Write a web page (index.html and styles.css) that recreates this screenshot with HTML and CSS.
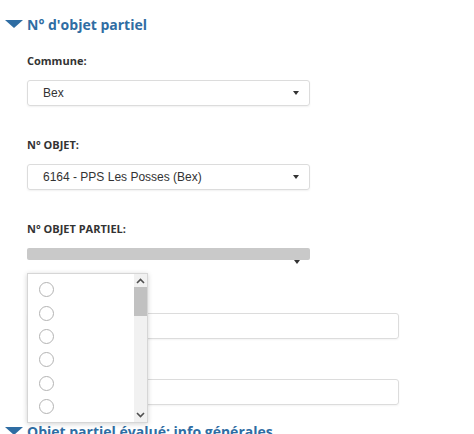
FILE: index.html
```html
<!DOCTYPE html>
<html lang="fr">
<head>
<meta charset="utf-8">
<title>N° d'objet partiel</title>
<link rel="stylesheet" href="styles.css">
</head>
<body>
<div class="page">
  <h2 class="sec-title"><span class="tri"></span>N° d'objet partiel</h2>
  <div class="form">
    <div class="field">
      <label class="lbl">Commune:</label>
      <div class="select"><span class="val">Bex</span><span class="caret"></span></div>
    </div>
    <div class="field">
      <label class="lbl">N° OBJET:</label>
      <div class="select"><span class="val">6164 - PPS Les Posses (Bex)</span><span class="caret"></span></div>
    </div>
    <div class="field field-open">
      <label class="lbl">N° OBJET PARTIEL:</label>
      <div class="select-open"><div class="bar"></div><span class="caret caret-low"></span></div>
      <div class="dropdown">
        <ul class="options">
          <li class="opt"><span class="radio"></span></li>
          <li class="opt"><span class="radio"></span></li>
          <li class="opt"><span class="radio"></span></li>
          <li class="opt"><span class="radio"></span></li>
          <li class="opt"><span class="radio"></span></li>
          <li class="opt"><span class="radio"></span></li>
          <li class="opt"><span class="radio"></span></li>
        </ul>
        <div class="sbar">
          <svg class="arr arr-up" width="9" height="6" viewBox="0 0 9 6"><path d="M1 5 L4.5 1.5 L8 5" fill="none" stroke="#505050" stroke-width="1.6"/></svg>
          <span class="thumb"></span>
          <svg class="arr arr-down" width="9" height="6" viewBox="0 0 9 6"><path d="M1 1 L4.5 4.5 L8 1" fill="none" stroke="#505050" stroke-width="1.6"/></svg>
        </div>
      </div>
    </div>
    <div class="field field-in first-in">
      <div class="input"></div>
    </div>
    <div class="field field-in">
      <div class="input"></div>
    </div>
  </div>
  <h2 class="sec-title sec-title-2"><span class="tri"></span>Objet partiel évalué: info générales</h2>
</div>
</body>
</html>
```

FILE: styles.css
```css
html, body {
  margin: 0;
  padding: 0;
  background: #ffffff;
}
body {
  font-family: "Open Sans", "Liberation Sans", sans-serif;
  color: #333333;
  overflow: hidden;
  height: 434px;
}
.page {
  padding-top: 15px;
}
.sec-title {
  display: flex;
  align-items: center;
  gap: 4px;
  margin: 0;
  padding-left: 5px;
  font-size: 14px;
  line-height: 20px;
  font-weight: 700;
  color: #2f6da3;
  white-space: nowrap;
}
.tri {
  display: block;
  width: 0;
  height: 0;
  border-left: 9px solid transparent;
  border-right: 9px solid transparent;
  border-top: 8px solid #2f6da3;
  margin-top: -3px;
}
.sec-title-2 {
  margin-top: 17px;
}
.form {
  padding-left: 27px;
  padding-top: 18px;
}
.field {
  margin-bottom: 31px;
}
.lbl {
  display: block;
  font-size: 11px;
  line-height: 15px;
  font-weight: 700;
  color: #333333;
  margin-bottom: 12px;
}
.select {
  box-sizing: border-box;
  width: 283px;
  height: 26px;
  border: 1px solid #dcdcdc;
  border-radius: 3px;
  box-shadow: 0 1px 2px rgba(0,0,0,0.06);
  display: flex;
  align-items: center;
  justify-content: space-between;
  padding: 0 10px 0 15px;
  font-family: "Liberation Sans", Arial, sans-serif;
  font-size: 12px;
  color: #333333;
}
.caret {
  width: 0;
  height: 0;
  border-left: 3.5px solid transparent;
  border-right: 3.5px solid transparent;
  border-top: 4px solid #333333;
}
.field-open {
  position: relative;
  margin-bottom: 0;
}
.select-open {
  width: 283px;
  height: 26px;
  display: flex;
  flex-direction: column;
  align-items: flex-end;
}
.bar {
  align-self: stretch;
  height: 12px;
  background: #c9c9c9;
  border-radius: 2px;
}
.caret-low {
  margin-top: 0;
  margin-right: 10px;
}
.dropdown {
  position: absolute;
  left: 0;
  top: 52px;
  width: 121px;
  height: 150px;
  box-sizing: border-box;
  border: 1px solid #d6d6d6;
  background: #ffffff;
  box-shadow: 0 1px 5px rgba(0,0,0,0.18);
  overflow: hidden;
  z-index: 5;
  display: flex;
}
.options {
  list-style: none;
  margin: 0;
  padding: 4px 0 0 11px;
  flex: 1;
}
.opt {
  height: 23.4px;
  display: flex;
  align-items: center;
}
.radio {
  box-sizing: border-box;
  width: 15px;
  height: 15px;
  border: 1.6px solid #b3b3b3;
  border-radius: 50%;
}
.sbar {
  width: 13px;
  background: #f1f1f1;
  display: flex;
  flex-direction: column;
  align-items: center;
}
.arr {
  display: block;
  flex: none;
}
.arr-up {
  margin-top: 4px;
}
.thumb {
  width: 13px;
  height: 29px;
  margin-top: 3px;
  background: #c1c1c1;
}
.arr-down {
  margin-top: auto;
  margin-bottom: 4px;
}
.field-in {
  margin-bottom: 40px;
}
.first-in {
  margin-top: 39px;
}
.field-in:last-child {
  margin-bottom: 0;
}
.input {
  box-sizing: border-box;
  width: 372px;
  height: 26px;
  border: 1px solid #dcdcdc;
  border-radius: 3px;
  box-shadow: 0 1px 2px rgba(0,0,0,0.05);
}
```
